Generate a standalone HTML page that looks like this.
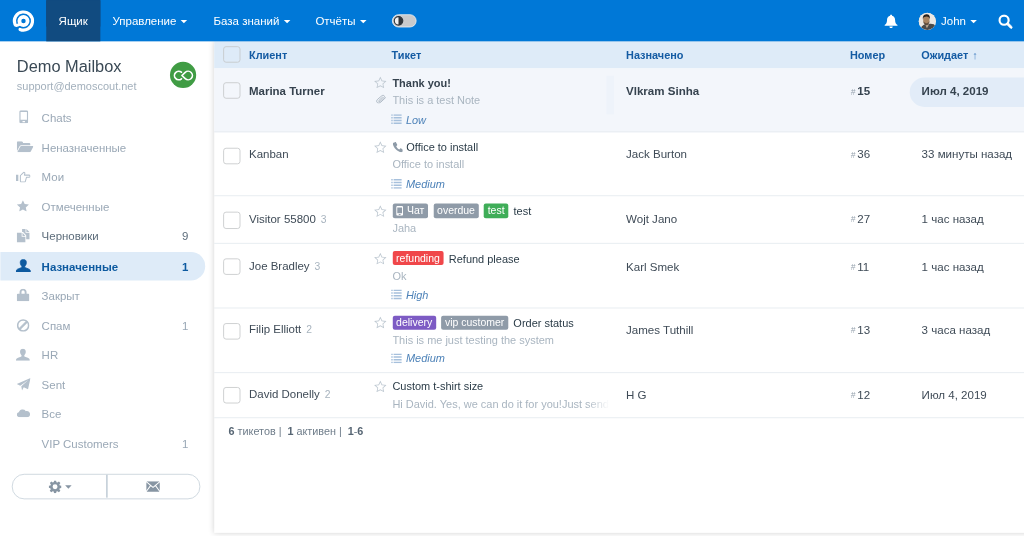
<!DOCTYPE html>
<html lang="ru">
<head>
<meta charset="utf-8">
<title>Demo Mailbox</title>
<style>
*{box-sizing:border-box;margin:0;padding:0}
html,body{width:1024px;height:536px;overflow:hidden;background:#fff}
body{font-family:"Liberation Sans",sans-serif;font-size:14.05px;line-height:20px;color:#2a3b47}
#app{position:absolute;left:-16px;top:-16px;width:1300px;height:705px;transform:scale(.8192);transform-origin:0 0;background:#fff;overflow:hidden;filter:blur(.38px)}
#in{position:absolute;left:19.53125px;top:19.53125px;width:1250px;height:655px}
svg{display:block;overflow:visible}
.abs{position:absolute}
/* NAVBAR */
#nav{position:absolute;left:-19.53125px;top:-19.53125px;width:1300px;height:69.53125px;background:#0078d7;color:#fff}
#navin{position:absolute;left:19.53125px;top:19.53125px;width:1250px;height:50px}
#nav .brand{position:absolute;left:15.3px;top:12.3px;width:26.4px;height:26.4px}
#nav .item{position:absolute;top:0;height:50px;line-height:50px;padding:0 15px;font-size:14.05px;color:#fff;white-space:nowrap}
#nav .item.active{background:#114b80;padding:0 15.5px;box-shadow:0 -18px 0 #114b80}
.caret{display:inline-block;width:0;height:0;margin-left:1.5px;vertical-align:middle;border-top:4.5px solid;border-left:4.5px solid transparent;border-right:4.5px solid transparent}
/* SIDEBAR */
#side{position:absolute;left:0;top:50px;width:261px;height:605px;background:#fff}
#side .title{position:absolute;left:20.5px;top:16.2px;font-size:20px;line-height:28px;color:#3a4955;white-space:nowrap}
#side .email{position:absolute;left:20.5px;top:47.8px;font-size:13.4px;line-height:18px;color:#a3b0bc;white-space:nowrap}
#side .badge{position:absolute;left:207.5px;top:25.3px;width:32.2px;height:32.2px;border-radius:50%;background:#409c44}
#menu{position:absolute;left:0;top:75.9px;width:261px;list-style:none}
#menu li{position:relative;height:36.2px;line-height:36.2px;color:#9aa8b6;font-size:14px;white-space:nowrap}
#menu li svg{position:absolute;fill:#b4c0cc}
#menu li .tx{position:absolute;left:50.8px;top:0}
#menu li .ct{position:absolute;right:31px;top:0;text-align:right}
#menu li.dark{color:#5d6d7b}
#menu li.active{color:#0d5aa0;font-weight:bold}
#menu li.active:before{content:"";position:absolute;left:0;top:.3px;width:250px;height:35.8px;background:#deebf8;border-radius:0 18px 18px 0}
#menu li.active svg{fill:#0d5aa0}
#menu li.active .tx,#menu li.active .ct{top:1.1px}
#sbtn{position:absolute;left:14.9px;top:528.5px;width:230px;height:30.8px;border:1.2px solid #c5d0d9;border-radius:15px}
#sbtn .sep{position:absolute;left:114px;top:0;width:1.2px;height:28.4px;background:#c5d0d9}
#sbtn svg{position:absolute;fill:#8795a3}
/* CONTENT */
#main{position:absolute;left:261px;top:50px;width:1040px;height:600.6px;background:#fff;box-shadow:0 0 7px rgba(0,0,0,.18)}
#thead{position:absolute;left:0;top:0;width:1040px;height:33px;background:#deebf8}
#thead span{position:absolute;top:2.6px;line-height:32.4px;font-size:13.3px;font-weight:bold;color:#145ba3;white-space:nowrap}
.cb{position:absolute;left:11.8px;width:20.2px;height:20.2px;border:1.3px solid #c4c6c8;border-radius:3.5px}
.row{position:absolute;left:0;width:1040px;border-bottom:1.2px solid #e3e9ee}
.row.act{background:#f3f6fb}
.row .cust{position:absolute;left:43px;top:18px;line-height:20px;font-size:14px;color:#3f4b57;white-space:nowrap}
.row .cust i{font-style:normal;font-size:12.6px;color:#a7b3be;margin-left:6px}
.row .star{position:absolute;left:195.6px;top:10.8px;width:15.6px;height:14.4px}
.row .subj{position:absolute;left:218px;top:9px;height:20px;line-height:20px;font-size:13.4px;color:#2a3b47;white-space:nowrap}
.row .prev{position:absolute;left:218px;top:29.6px;height:20px;line-height:20px;font-size:13.4px;color:#a9b5c0;white-space:nowrap;width:270px;overflow:hidden}
.row .prio{position:absolute;left:234.5px;top:54px;height:20px;line-height:20px;font-size:13.4px;font-style:italic;color:#4d82b8;white-space:nowrap}
.row .prio svg{position:absolute;left:-18.5px;top:2.7px}
.row .asg{position:absolute;left:503.2px;top:18.6px;line-height:20px;font-size:14.1px;color:#3f4b57;white-space:nowrap}
.row .num{position:absolute;left:777.6px;top:18.6px;line-height:20px;font-size:14.1px;color:#3f4b57;white-space:nowrap}
.row .num i{font-style:italic;font-weight:normal;font-size:10.2px;color:#97a3af;margin-right:2.2px;position:relative;top:-.9px}
.row .dt{position:absolute;left:864px;top:18.6px;line-height:20px;font-size:14.1px;color:#3f4b57;white-space:nowrap}
.row.act .cust,.row.act .subj,.row.act .asg,.row.act .num,.row.act .dt{font-weight:bold;color:#36434f}
.tag{display:inline-block;height:17.2px;line-height:17.2px;padding:0 4.5px;border-radius:2.5px;color:#fff;font-size:12.8px;margin-right:6.5px;vertical-align:1px;background:#8f9ba8}
.tag.g{background:#3fad58}.tag.r{background:#f0474a}.tag.p{background:#7d5bc4}
#foot{position:absolute;left:18px;top:466.3px;line-height:20px;font-size:13.2px;color:#6f7d8a;white-space:nowrap}
#foot b{color:#566573}
</style>
</head>
<body>

<svg width="0" height="0" style="position:absolute">
<defs>
<symbol id="i-phone" viewBox="0 0 11 16"><path fill-rule="evenodd" d="M2 0h7a2 2 0 0 1 2 2v12a2 2 0 0 1-2 2H2a2 2 0 0 1-2-2V2a2 2 0 0 1 2-2zM1.6 2.4v9.4h7.8V2.4zM4 13.2v1.6h3v-1.6z"/></symbol>
<symbol id="i-folder" viewBox="0 0 21 14"><path d="M0 1.4Q0 0 1.4 0H6q1 0 1.4.9L8 2.1h7.6q1.4 0 1.4 1.4V4.9H5.6q-1.5 0-2.2 1.3L0 12.6z"/><path d="M5.7 6.1H20q1.2 0 .6 1.1l-3 5.8q-.5 1-1.7 1H1.3q-1 0-.5-.9l3.2-6q.5-1 1.7-1z"/></symbol>
<symbol id="i-hand" viewBox="0 0 17.8 13.3"><path stroke="none" d="M0 3.900h2.900v7.700H0z"/><path fill="none" stroke-width="1.250" stroke-linejoin="round" d="M5.400 5.200Q5.400 4.300 6.300 4L9.400 .9Q10.700 .5 10.900 1.800L10.300 4.300H16.200Q17.200 4.400 17.200 5.550T16.200 6.800H12.900L11.500 12Q11.300 12.700 10.400 12.700H6.400Q5.400 12.700 5.400 11.700z"/></symbol>
<symbol id="i-star" viewBox="0 0 16 15"><path d="M8 0l2.350 5.100 5.650.630-4.200 3.800 1.150 5.470L8 12.250 3.050 15l1.150-5.470L0 5.730l5.650-.63z"/></symbol>
<symbol id="i-star-o" viewBox="0 0 16 15"><path fill-rule="evenodd" d="M8 0l2.350 5.100 5.650.630-4.200 3.800 1.150 5.470L8 12.250 3.050 15l1.150-5.470L0 5.730l5.650-.63zM8 2.500L6.350 6.050l-3.950.43 2.930 2.660-.81 3.850L8 11.100l3.480 1.890-.81-3.850 2.930-2.660-3.950-.43z"/></symbol>
<symbol id="i-dup" viewBox="0 0 16.500 16.500"><path d="M6.500 0h4.200v4.800h4.800v7.700h-4V7.600L7.700 3.800H6.500zM11.700 0l3.800 3.800h-3.800z"/><path d="M0 4.800h6v4.800h4.500v6.900H0zM7 4.800l3.500 3.800H7z"/></symbol>
<symbol id="i-user" viewBox="0 0 18 15.500"><path d="M9 0c2.300 0 3.700 1.600 3.700 4 0 1.900-.8 3.600-1.900 4.400v1c0 .5.300.8.900 1l3.600 1.400c1.700.6 2.700 1.700 2.700 3.700H0c0-2 1-3.100 2.700-3.700l3.600-1.400c.6-.2.900-.5.900-1v-1C6.100 7.600 5.300 5.900 5.300 4 5.300 1.600 6.700 0 9 0z"/></symbol>
<symbol id="i-lock" viewBox="0 0 15.500 15.500"><path fill-rule="evenodd" d="M7.750 0c2.600 0 4.300 1.700 4.300 4v2.300h1.900q1.550 0 1.550 1.500V14q0 1.500-1.550 1.500H1.550Q0 15.500 0 14V7.800q0-1.500 1.550-1.500h1.900V4c0-2.300 1.700-4 4.300-4zM5.800 6.300h3.900V4.100c0-1.100-.8-1.900-1.950-1.900S5.800 3 5.800 4.100z"/></symbol>
<symbol id="i-ban" viewBox="0 0 16 16"><circle cx="8" cy="8" r="6.900" fill="none" stroke-width="2"/><path d="M12.100 2.500l1.400 1.400-9.600 9.600-1.400-1.400z"/></symbol>
<symbol id="i-send" viewBox="0 0 17 15.500"><path d="M17 0L13.900 13.800 8.600 11.400 6.500 15.500 5.600 10.100 14.300 2.500 4.300 9.400 0 7.400z"/></symbol>
<symbol id="i-cloud" viewBox="0 0 16.500 10"><path d="M3.600 10C1.500 10 0 8.700 0 6.900c0-1.500 1-2.700 2.500-3C3 1.700 4.700 0 7 0c1.900 0 3.400 1 4.100 2.600.4-.2.800-.3 1.300-.3 2.300 0 4.100 1.700 4.100 3.900 0 2.100-1.700 3.800-3.900 3.800z"/></symbol>
<symbol id="i-cog" viewBox="0 0 16 16"><path fill-rule="evenodd" d="M6.700 0h2.600l.4 2.200 1.300.55 1.850-1.300 1.850 1.850-1.300 1.850.55 1.300 2.200.4v2.600l-2.200.4-.55 1.300 1.300 1.850-1.850 1.850-1.850-1.300-1.300.55-.4 2.200H6.700l-.4-2.200-1.300-.55-1.850 1.300L1.300 13l1.300-1.850-.55-1.300L0 9.300V6.700l2.200-.4.550-1.300L1.450 3.150 3.300 1.300l1.850 1.300 1.300-.55zM8 4.900A3.100 3.100 0 1 0 8 11.100 3.100 3.100 0 1 0 8 4.900z"/></symbol>
<symbol id="i-env" viewBox="0 0 17 13"><path d="M.4 0h16.200L8.500 6.600zM0 1.100l4.700 4.100L0 11.600zM17 1.100v10.500l-4.700-6.400zM5.700 6.100l2.800 2.300 2.800-2.300 5.200 6.900H.5z"/></symbol>
<symbol id="i-clip" viewBox="0 0 15 12"><path fill="none" stroke-width="1.050" stroke-linecap="round" d="M13.600 3.300L7.300 9.300c-1.500 1.400-3.500 1.600-4.700.5-1.200-1.100-1-2.900.4-4.200L8.600 .9c1-.9 2.300-1 3.100-.3.800.8.600 1.900-.3 2.800L6.300 8.200c-.6.500-1.200.6-1.600.2-.4-.4-.300-1 .3-1.500l4.600-4.200" transform="translate(.3 .8)"/></symbol>
<symbol id="i-ear" viewBox="0 0 12 12.500"><path d="M2.700.2c.5-.4 1-.2 1.300.3l1.300 2.300c.3.500.2 1-.2 1.400l-.9.800c.8 1.700 2.100 3.100 3.800 4l.9-1c.4-.4.900-.5 1.400-.2l2.200 1.400c.5.300.6.800.3 1.300l-.8 1.200c-.5.700-1.300.9-2.200.7C5.200 11.200 1.300 7 .2 2.900 0 2.100.2 1.400.8.900z"/></symbol>
<symbol id="i-list" viewBox="0 0 13 12"><path d="M0 0h1.900v1.900H0zM3 0h10v1.900H3zM0 3.350h1.900v1.900H0zM3 3.350h10v1.900H3zM0 6.700h1.900v1.900H0zM3 6.700h10v1.900H3zM0 10.050h1.900v1.950H0zM3 10.050h10v1.950H3z"/></symbol>
<symbol id="i-bell" viewBox="0 0 17 17"><path d="M8.500 0c.7 0 1.200.5 1.200 1.200v.4c2.400.6 3.900 2.600 3.900 5.200 0 3.400 1 5 3.100 6.300v1H.3v-1C2.400 11.800 3.400 10.200 3.400 6.800c0-2.600 1.500-4.600 3.900-5.200v-.4C7.300.5 7.800 0 8.500 0zM6.400 15h4.200c0 1.200-.9 2-2.100 2s-2.100-.8-2.100-2z"/></symbol>
<symbol id="i-search" viewBox="0 0 17 17"><circle cx="7" cy="7" r="5.400" fill="none" stroke-width="2.600"/><path d="M10.300 12.100l1.800-1.800 4.600 4.600q.6.600 0 1.200l-.6.600q-.6.600-1.200 0z"/></symbol>
</defs>
</svg>

<div id="app"><div id="in">
  <div id="side">
    <div class="title">Demo Mailbox</div>
    <div class="email">support@demoscout.net</div>
    <div class="badge"><svg width="32.2" height="32.2" viewBox="0 0 32.2 32.2"><g fill="none" stroke="#fff" stroke-width="2" stroke-linecap="round" stroke-linejoin="round"><path d="M14.04 12.72A5.2 5.2 0 1 0 14.04 20.68"/><path d="M14.6 16.7L18.64 12.91A5.2 5.2 0 1 1 18.64 20.49z"/></g></svg></div>
    <ul id="menu">
      <li class=""><svg style="left:23.06px;top:8.8px;" width="11" height="16"><use href="#i-phone" width="11" height="16"/></svg><span class="tx">Chats</span></li>
      <li class=""><svg style="left:20.02px;top:10.84px;" width="20.5" height="13.5"><use href="#i-folder" width="20.5" height="13.5"/></svg><span class="tx">Неназначенные</span></li>
      <li class=""><svg style="left:19.91px;top:10.99px;stroke:#b4c0cc;" width="17.8" height="13.3"><use href="#i-hand" width="17.8" height="13.3"/></svg><span class="tx">Мои</span></li>
      <li class=""><svg style="left:20.45px;top:10.06px;" width="15" height="13.8"><use href="#i-star" width="15" height="13.8"/></svg><span class="tx">Отмеченные</span></li>
      <li class="dark"><svg style="left:20.31px;top:9.14px;" width="16.5" height="16.5"><use href="#i-dup" width="16.5" height="16.5"/></svg><span class="tx">Черновики</span><span class="ct">9</span></li>
      <li class="active"><svg style="left:19.44px;top:9.93px;stroke:#0d5aa0;" width="18" height="15.5"><use href="#i-user" width="18" height="15.5"/></svg><span class="tx">Назначенные</span><span class="ct">1</span></li>
      <li class=""><svg style="left:20.01px;top:9.92px;" width="15.4" height="15.4"><use href="#i-lock" width="15.4" height="15.4"/></svg><span class="tx">Закрыт</span></li>
      <li class=""><svg style="left:20.4px;top:9.99px;stroke:#b4c0cc;" width="15.6" height="15.6"><use href="#i-ban" width="15.6" height="15.6"/></svg><span class="tx">Спам</span><span class="ct">1</span></li>
      <li class=""><svg style="left:19.94px;top:10.11px;" width="17" height="15"><use href="#i-user" width="17" height="15"/></svg><span class="tx">HR</span></li>
      <li class=""><svg style="left:20.04px;top:9.47px;" width="16.8" height="15.4"><use href="#i-send" width="16.8" height="15.4"/></svg><span class="tx">Sent</span></li>
      <li class=""><svg style="left:20.0px;top:11.23px;" width="16.4" height="9.8"><use href="#i-cloud" width="16.4" height="9.8"/></svg><span class="tx">Все</span></li>
      <li class=""><span class="tx">VIP Customers</span><span class="ct">1</span></li>
    </ul>
    <div id="sbtn"><div class="sep"></div>
      <svg style="left:43.5px;top:7.1px;" width="15.5" height="15.5"><use href="#i-cog" width="15.5" height="15.5"/></svg>
      <span class="caret abs" style="left:63.6px;top:13.3px;color:#8795a3;margin:0"></span>
      <svg style="left:163px;top:8.1px;" width="16.7" height="13"><use href="#i-env" width="16.7" height="13"/></svg>
    </div>
  </div>
  <div id="main">
    <div id="thead">
      <div class="cb" style="top:6.500px"></div>
      <span style="left:43px">Клиент</span>
      <span style="left:217px">Тикет</span>
      <span style="left:503.200px">Назначено</span>
      <span style="left:776.600px">Номер</span>
      <span style="left:863.500px">Ожидает <b style="font-weight:normal;font-size:13.5px;color:#4a84c4;position:relative;top:-.5px;margin-left:1px">↑</b></span>
    </div>
    <div class="row act" style="top:33.01px;height:78.73px"><div class="abs" style="left:849.5px;top:11px;width:200px;height:36.4px;border-radius:18.2px;background:#e2ecf8"></div><div class="abs" style="left:479.7px;top:9.4px;width:9px;height:46.6px;background:rgba(215,230,248,.17)"></div><div class="cb" style="top:17.7px"></div><div class="abs" style="left:0;top:-0.4px"><div class="cust">Marina Turner</div><div class="asg">Vlkram Sinha</div><div class="num"><i>#</i>15</div><div class="dt">Июл 4, 2019</div></div><div class="abs" style="left:0;top:0.15px"><svg class="star" style="fill:#bfc9d2"><use href="#i-star-o" width="15.6" height="14.4"/></svg><svg class="abs" style="left:196px;top:32.6px;stroke:#9eabb8" width="14.5" height="11"><use href="#i-clip" width="14.5" height="11"/></svg><div class="subj">Thank you!</div><div class="prev">This is a test Note</div><div class="prio" style="margin-top:0px"><svg width="13" height="12" style="fill:#a6c0dc"><use href="#i-list" width="13" height="12"/></svg>Low</div></div></div>
    <div class="row" style="top:111.74px;height:78.13px"><div class="cb" style="top:18.8px"></div><div class="abs" style="left:0;top:-1.5px"><div class="cust">Kanban</div><div class="asg">Jack Burton</div><div class="num"><i>#</i>36</div><div class="dt">33 минуты назад</div></div><div class="abs" style="left:0;top:0px"><svg class="star" style="fill:#bfc9d2"><use href="#i-star-o" width="15.6" height="14.4"/></svg><div class="subj"><svg width="12" height="12.5" style="display:inline-block;fill:#8e9ba8;vertical-align:-1px;margin-right:5px"><use href="#i-ear" width="12" height="12.5"/></svg>Office to install</div><div class="prev">Office to install</div><div class="prio" style="margin-top:0px"><svg width="13" height="12" style="fill:#a6c0dc"><use href="#i-list" width="13" height="12"/></svg>Medium</div></div></div>
    <div class="row" style="top:189.87px;height:57.68px"><div class="cb" style="top:19.0px"></div><div class="abs" style="left:0;top:-0.9px"><div class="cust">Visitor 55800<i>3</i></div><div class="asg">Wojt Jano</div><div class="num"><i>#</i>27</div><div class="dt">1 час назад</div></div><div class="abs" style="left:0;top:0px"><svg class="star" style="fill:#bfc9d2"><use href="#i-star-o" width="15.6" height="14.4"/></svg><div class="subj"><span class="tag"><svg width="8.8" height="12" style="display:inline-block;fill:#fff;vertical-align:-1.8px;margin-right:4.2px;margin-left:.3px"><use href="#i-phone" width="8.8" height="12"/></svg>Чат</span><span class="tag">overdue</span><span class="tag g">test</span>test</div><div class="prev">Jaha</div></div></div>
    <div class="row" style="top:247.55px;height:78.43px"><div class="cb" style="top:18.0px"></div><div class="abs" style="left:0;top:-1.1px"><div class="cust">Joe Bradley<i>3</i></div><div class="asg">Karl Smek</div><div class="num"><i>#</i>11</div><div class="dt">1 час назад</div></div><div class="abs" style="left:0;top:0px"><svg class="star" style="fill:#bfc9d2"><use href="#i-star-o" width="15.6" height="14.4"/></svg><div class="subj"><span class="tag r">refunding</span>Refund please</div><div class="prev">Ok</div><div class="prio" style="margin-top:-0.8px"><svg width="13" height="12" style="fill:#a6c0dc"><use href="#i-list" width="13" height="12"/></svg>High</div></div></div>
    <div class="row" style="top:325.98px;height:79.34px"><div class="cb" style="top:18.3px"></div><div class="abs" style="left:0;top:-2.3px"><div class="cust">Filip Elliott<i>2</i></div><div class="asg">James Tuthill</div><div class="num"><i>#</i>13</div><div class="dt">3 часа назад</div></div><div class="abs" style="left:0;top:0px"><svg class="star" style="fill:#bfc9d2"><use href="#i-star-o" width="15.6" height="14.4"/></svg><div class="subj"><span class="tag p">delivery</span><span class="tag">vip customer</span>Order status</div><div class="prev">This is me just testing the system</div><div class="prio" style="margin-top:-1.2px"><svg width="13" height="12" style="fill:#a6c0dc"><use href="#i-list" width="13" height="12"/></svg>Medium</div></div></div>
    <div class="row" style="top:405.32px;height:55.54px"><div class="cb" style="top:17.0px"></div><div class="abs" style="left:0;top:-2.7px"><div class="cust">David Donelly<i>2</i></div><div class="asg">H G</div><div class="num"><i>#</i>12</div><div class="dt">Июл 4, 2019</div></div><div class="abs" style="left:0;top:-1.5px"><svg class="star" style="fill:#bfc9d2"><use href="#i-star-o" width="15.6" height="14.4"/></svg><div class="subj">Custom t-shirt size</div><div class="prev">Hi David. Yes, we can do it for you!Just send</div><div class="abs" style="left:455px;top:30px;width:34px;height:20px;background:linear-gradient(to right,rgba(255,255,255,0),#fff 80%)"></div></div></div>
    <div id="foot"><b>6</b> тикетов |&nbsp; <b>1</b> активен |&nbsp; <b>1</b>-<b>6</b></div>
  </div>
  <div id="nav"><div id="navin">
    <svg class="brand" viewBox="0 0 100 100"><g fill="none" stroke="#fff" stroke-linecap="round" stroke-linejoin="round"><path stroke-width="14.5" d="M34 89A42 42 0 1 0 10.500 65Q15 75 30 66"/><circle cx="50" cy="50" r="19" stroke-width="17.5"/></g></svg>
    <div class="item active" style="left:56px">Ящик</div>
    <div class="item" style="left:122.300px">Управление <span class="caret"></span></div>
    <div class="item" style="left:245.600px">База знаний <span class="caret"></span></div>
    <div class="item" style="left:370px">Отчёты <span class="caret"></span></div>
    <div class="abs" style="left:478.2px;top:17px;width:29.9px;height:16.9px;border-radius:8.5px;background:#c8cacc;border:1.3px solid #eef0f1"><svg width="12" height="12" viewBox="0 0 12 12" style="position:absolute;left:1.6px;top:1.1px"><circle cx="6" cy="6" r="5.2" fill="#f1f1f1" stroke="#2f353b" stroke-width="1.4"/><path d="M6 .8A5.200 5.200 0 0 1 6 11.200z" fill="#2f353b"/></svg></div>
    <svg class="abs" style="left:1079.700px;top:17px;fill:#fff" width="16.500" height="17"><use href="#i-bell" width="16.500" height="17"/></svg>
    <div class="abs" id="ava" style="left:1121px;top:15px;width:21.4px;height:21.4px;border-radius:50%;overflow:hidden;background:#ece8e2"><svg width="21.4" height="21.4" viewBox="0 0 21.4 21.4"><rect width="21.4" height="21.4" fill="#ece8e3"/><path d="M1.500 21.400Q3 15.500 8 14.200L13.500 13.600Q19 13.200 21.400 17V21.400z" fill="#4b4a49"/><path d="M8 14.500L10 19 12.800 14z" fill="#b9a58f"/><ellipse cx="9.300" cy="8.700" rx="3.900" ry="5.100" fill="#a88462"/><path d="M5.600 10.500Q6 15.300 9.500 15.300T13.300 10.300Q12 13 9.400 12.800T5.600 10.500z" fill="#4a382b" opacity=".75"/><path d="M5.100 8.300Q4.300 2.400 9.200 2T13.800 8Q13.200 5.300 11 4.900T6.200 5.700Q5.600 6.800 5.100 8.300z" fill="#2b221c"/></svg></div>
    <div class="item" style="left:1133.700px">John <span class="caret"></span></div>
    <svg class="abs" style="left:1218px;top:17px;fill:#fff;stroke:#fff" width="17.500" height="17.500"><use href="#i-search" width="17.500" height="17.500"/></svg>
  </div></div>
</div></div>
</body>
</html>
